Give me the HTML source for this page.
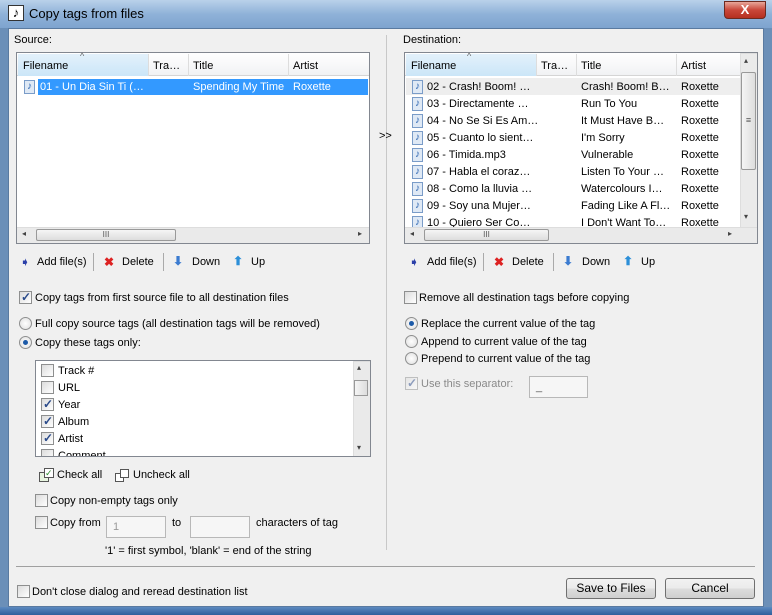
<!DOCTYPE html><html><head><style>
*{box-sizing:border-box;margin:0;padding:0}
body{width:772px;height:615px;overflow:hidden;background:#6b8fb8;font-family:"Liberation Sans",sans-serif;font-size:11px;color:#000;position:relative}
.a{position:absolute;white-space:nowrap}
.title{left:0;top:0;width:772px;height:28px;background:linear-gradient(180deg,#b9d1ea,#8fb2d8 50%,#7ea4cf);}
.client{left:8px;top:28px;width:756px;height:579px;background:#f0f0f0;border:1px solid #5a7aa0}
.lb{background:#fff;border:1px solid #828790}
.hdr{background:linear-gradient(#fff,#f1f2f4);border-bottom:1px solid #d5d5d5;height:23px}
.cb{width:13px;height:13px;border:1px solid #8e8f8f;background:linear-gradient(135deg,#dcdcdc,#fff)}
.rd{width:13px;height:13px;border:1px solid #8e8f8f;border-radius:50%;background:radial-gradient(#fff,#ddd)}
.rd.on::after{content:"";position:absolute;left:3px;top:3px;width:5px;height:5px;border-radius:50%;background:#1c5aa8}
.ck::after{content:"✓";position:absolute;left:1px;top:-2px;font-size:12px;color:#2a4a8a;font-weight:bold}
.inp{background:#f6f6f6;border:1px solid #b8b8b8}
.btn{border:1px solid #707070;border-radius:3px;background:linear-gradient(#f2f2f2,#ebebeb 50%,#dddddd 51%,#cfcfcf);text-align:center;line-height:19px;font-size:12px}
.mi{width:11px;height:14px;background:#dfe9f5;border:1px solid #7a9cc8;font-size:10px;color:#2b64b0;line-height:12px;text-align:center}
.sb{background:#eaeaea;border-top:1px solid #ddd}
</style></head><body>
<div class="a title"></div>
<div class="a" style="left:8px;top:5px;width:16px;height:16px;background:#fff;border:1px solid #333;font-size:13px;line-height:14px;text-align:center">♪</div>
<div class="a" style="left:29px;top:6px;font-size:13px">Copy tags from files</div>
<div class="a" style="left:724px;top:1px;width:42px;height:18px;border-radius:0 0 4px 4px;background:linear-gradient(#e8a79a,#c9473a 50%,#b52f20);border:1px solid #6d2a20;color:#fff;text-align:center;font-weight:bold;font-size:13px;line-height:16px">X</div>
<div class="a client"></div>

<div class="a" style="left:14px;top:34px">Source:</div>
<div class="a" style="left:403px;top:34px">Destination:</div>
<div class="a" style="left:386px;top:35px;width:1px;height:515px;background:#c8c8c8"></div>
<div class="a" style="left:379px;top:130px;font-size:11px">&gt;&gt;</div>

<!-- source list -->
<div class="a lb" style="left:16px;top:52px;width:354px;height:192px"></div>
<div class="a hdr" style="left:17px;top:53px;width:352px"></div>
<div class="a" style="left:18px;top:54px;width:130px;height:22px;background:linear-gradient(#e3f1fb,#cbe6f8)"></div>
<div class="a" style="left:80px;top:51px;font-size:9px;color:#666">^</div>
<div class="a" style="left:23px;top:60px">Filename</div>
<div class="a" style="left:148px;top:54px;width:1px;height:22px;background:#ddd"></div>
<div class="a" style="left:153px;top:60px">Tra…</div>
<div class="a" style="left:188px;top:54px;width:1px;height:22px;background:#ddd"></div>
<div class="a" style="left:193px;top:60px">Title</div>
<div class="a" style="left:288px;top:54px;width:1px;height:22px;background:#ddd"></div>
<div class="a" style="left:293px;top:60px">Artist</div>
<div class="a" style="left:38px;top:79px;width:330px;height:16px;background:#3399ff"></div>
<div class="a mi" style="left:24px;top:80px">♪</div>
<div class="a" style="left:40px;top:81px;color:#fff">01 - Un Dia Sin Ti (…</div>
<div class="a" style="left:193px;top:81px;color:#fff">Spending My Time</div>
<div class="a" style="left:293px;top:81px;color:#fff">Roxette</div>
<div class="a sb" style="left:17px;top:227px;width:352px;height:16px"></div>
<div class="a" style="left:36px;top:229px;width:140px;height:12px;border:1px solid #999;border-radius:2px;background:linear-gradient(#f5f5f5,#ddd);font-size:8px;text-align:center;line-height:10px;color:#555">III</div>
<div class="a" style="left:22px;top:229px;font-size:8px;color:#444">◂</div>
<div class="a" style="left:358px;top:229px;font-size:8px;color:#444">▸</div>

<!-- dest list -->
<div class="a lb" style="left:404px;top:52px;width:354px;height:192px"></div>
<div class="a hdr" style="left:405px;top:53px;width:335px"></div>
<div class="a" style="left:406px;top:54px;width:130px;height:22px;background:linear-gradient(#e3f1fb,#cbe6f8)"></div>
<div class="a" style="left:467px;top:51px;font-size:9px;color:#666">^</div>
<div class="a" style="left:411px;top:60px">Filename</div>
<div class="a" style="left:536px;top:54px;width:1px;height:22px;background:#ddd"></div>
<div class="a" style="left:541px;top:60px">Tra…</div>
<div class="a" style="left:576px;top:54px;width:1px;height:22px;background:#ddd"></div>
<div class="a" style="left:581px;top:60px">Title</div>
<div class="a" style="left:676px;top:54px;width:1px;height:22px;background:#ddd"></div>
<div class="a" style="left:681px;top:60px">Artist</div>
<div class="a" style="left:406px;top:78px;width:334px;height:17px;background:#eeeeee"></div>
<div class="a sb" style="left:740px;top:53px;width:17px;height:174px;border-left:1px solid #ddd"></div>
<div class="a" style="left:741px;top:72px;width:15px;height:98px;border:1px solid #999;border-radius:2px;background:linear-gradient(90deg,#f5f5f5,#ddd);font-size:9px;text-align:center;line-height:94px;color:#555">≡</div>
<div class="a" style="left:744px;top:56px;font-size:8px;color:#444">▴</div>
<div class="a" style="left:744px;top:212px;font-size:8px;color:#444">▾</div>
<div class="a sb" style="left:405px;top:227px;width:352px;height:16px"></div>
<div class="a" style="left:424px;top:229px;width:125px;height:12px;border:1px solid #999;border-radius:2px;background:linear-gradient(#f5f5f5,#ddd);font-size:8px;text-align:center;line-height:10px;color:#555">III</div>
<div class="a" style="left:410px;top:229px;font-size:8px;color:#444">◂</div>
<div class="a" style="left:728px;top:229px;font-size:8px;color:#444">▸</div>
<div class="a" style="left:405px;top:78px;width:335px;height:149px;overflow:hidden">
<div style="position:relative">
<div class="a mi" style="left:7px;top:2px">♪</div><div class="a" style="left:22px;top:3px">02 - Crash! Boom! …</div><div class="a" style="left:176px;top:3px">Crash! Boom! B…</div><div class="a" style="left:276px;top:3px">Roxette</div>
<div class="a mi" style="left:7px;top:19px">♪</div><div class="a" style="left:22px;top:20px">03 - Directamente …</div><div class="a" style="left:176px;top:20px">Run To You</div><div class="a" style="left:276px;top:20px">Roxette</div>
<div class="a mi" style="left:7px;top:36px">♪</div><div class="a" style="left:22px;top:37px">04 - No Se Si Es Am…</div><div class="a" style="left:176px;top:37px">It Must Have B…</div><div class="a" style="left:276px;top:37px">Roxette</div>
<div class="a mi" style="left:7px;top:53px">♪</div><div class="a" style="left:22px;top:54px">05 - Cuanto lo sient…</div><div class="a" style="left:176px;top:54px">I'm Sorry</div><div class="a" style="left:276px;top:54px">Roxette</div>
<div class="a mi" style="left:7px;top:70px">♪</div><div class="a" style="left:22px;top:71px">06 - Timida.mp3</div><div class="a" style="left:176px;top:71px">Vulnerable</div><div class="a" style="left:276px;top:71px">Roxette</div>
<div class="a mi" style="left:7px;top:87px">♪</div><div class="a" style="left:22px;top:88px">07 - Habla el coraz…</div><div class="a" style="left:176px;top:88px">Listen To Your …</div><div class="a" style="left:276px;top:88px">Roxette</div>
<div class="a mi" style="left:7px;top:104px">♪</div><div class="a" style="left:22px;top:105px">08 - Como la lluvia …</div><div class="a" style="left:176px;top:105px">Watercolours I…</div><div class="a" style="left:276px;top:105px">Roxette</div>
<div class="a mi" style="left:7px;top:121px">♪</div><div class="a" style="left:22px;top:122px">09 - Soy una Mujer…</div><div class="a" style="left:176px;top:122px">Fading Like A Fl…</div><div class="a" style="left:276px;top:122px">Roxette</div>
<div class="a mi" style="left:7px;top:138px">♪</div><div class="a" style="left:22px;top:139px">10 - Quiero Ser Co…</div><div class="a" style="left:176px;top:139px">I Don't Want To…</div><div class="a" style="left:276px;top:139px">Roxette</div>
</div></div>

<!-- toolbars -->
<div class="a" style="left:20px;top:255px;color:#2b3fa8;font-size:12px">➧</div><div class="a" style="left:37px;top:256px">Add file(s)</div>
<div class="a" style="left:93px;top:253px;width:1px;height:18px;background:#aaa"></div>
<div class="a" style="left:104px;top:255px;color:#d22;font-weight:bold;font-size:12px">✖</div><div class="a" style="left:122px;top:256px">Delete</div>
<div class="a" style="left:163px;top:253px;width:1px;height:18px;background:#aaa"></div>
<div class="a" style="left:173px;top:254px;color:#3b7bd0;font-weight:bold;font-size:12px">⬇</div><div class="a" style="left:192px;top:256px">Down</div>
<div class="a" style="left:233px;top:254px;color:#2c8fd8;font-weight:bold;font-size:12px">⬆</div><div class="a" style="left:251px;top:256px">Up</div>

<div class="a" style="left:409px;top:255px;color:#2b3fa8;font-size:12px">➧</div><div class="a" style="left:427px;top:256px">Add file(s)</div>
<div class="a" style="left:483px;top:253px;width:1px;height:18px;background:#aaa"></div>
<div class="a" style="left:494px;top:255px;color:#d22;font-weight:bold;font-size:12px">✖</div><div class="a" style="left:512px;top:256px">Delete</div>
<div class="a" style="left:553px;top:253px;width:1px;height:18px;background:#aaa"></div>
<div class="a" style="left:563px;top:254px;color:#3b7bd0;font-weight:bold;font-size:12px">⬇</div><div class="a" style="left:582px;top:256px">Down</div>
<div class="a" style="left:623px;top:254px;color:#2c8fd8;font-weight:bold;font-size:12px">⬆</div><div class="a" style="left:641px;top:256px">Up</div>

<!-- left options -->
<div class="a cb ck" style="left:19px;top:291px"></div><div class="a" style="left:35px;top:292px">Copy tags from first source file to all destination files</div>
<div class="a rd" style="left:19px;top:317px"></div><div class="a" style="left:35px;top:318px">Full copy source tags (all destination tags will be removed)</div>
<div class="a rd on" style="left:19px;top:336px"></div><div class="a" style="left:35px;top:337px">Copy these tags only:</div>

<div class="a lb" style="left:35px;top:360px;width:336px;height:97px"></div>
<div class="a sb" style="left:353px;top:361px;width:17px;height:95px;border-left:1px solid #ddd"></div>
<div class="a" style="left:354px;top:380px;width:14px;height:16px;border:1px solid #999;background:linear-gradient(90deg,#f5f5f5,#ddd)"></div>
<div class="a" style="left:357px;top:363px;font-size:8px;color:#444">▴</div>
<div class="a" style="left:357px;top:443px;font-size:8px;color:#444">▾</div>
<div class="a" style="left:36px;top:361px;width:316px;height:95px;overflow:hidden"><div style="position:relative">
<div class="a cb" style="left:5px;top:3px"></div><div class="a" style="left:22px;top:4px">Track #</div>
<div class="a cb" style="left:5px;top:20px"></div><div class="a" style="left:22px;top:21px">URL</div>
<div class="a cb ck" style="left:5px;top:37px"></div><div class="a" style="left:22px;top:38px">Year</div>
<div class="a cb ck" style="left:5px;top:54px"></div><div class="a" style="left:22px;top:55px">Album</div>
<div class="a cb ck" style="left:5px;top:71px"></div><div class="a" style="left:22px;top:72px">Artist</div>
<div class="a cb" style="left:5px;top:88px"></div><div class="a" style="left:22px;top:89px">Comment</div>
</div></div>

<div class="a" style="left:39px;top:472px;width:10px;height:10px;border:1px solid #555;background:#e8f5e0"></div><div class="a" style="left:44px;top:468px;width:10px;height:10px;border:1px solid #555;background:#fff;color:#2a8a2a;font-size:9px;line-height:9px">✓</div>
<div class="a" style="left:57px;top:469px">Check all</div>
<div class="a" style="left:115px;top:473px;width:9px;height:9px;border:1px solid #555;background:#fff"></div><div class="a" style="left:120px;top:469px;width:9px;height:9px;border:1px solid #555;background:#fff"></div>
<div class="a" style="left:133px;top:469px">Uncheck all</div>

<div class="a cb" style="left:35px;top:494px"></div><div class="a" style="left:50px;top:495px">Copy non-empty tags only</div>
<div class="a cb" style="left:35px;top:516px"></div><div class="a" style="left:50px;top:517px">Copy from</div>
<div class="a inp" style="left:106px;top:516px;width:60px;height:22px"></div><div class="a" style="left:113px;top:521px;color:#999">1</div>
<div class="a" style="left:172px;top:517px">to</div>
<div class="a inp" style="left:190px;top:516px;width:60px;height:22px"></div>
<div class="a" style="left:256px;top:517px">characters of tag</div>
<div class="a" style="left:105px;top:545px">'1' = first symbol, 'blank' = end of the string</div>
<div class="a" style="left:16px;top:566px;width:739px;height:1px;background:#a0a0a0"></div>

<div class="a cb" style="left:17px;top:585px"></div><div class="a" style="left:32px;top:586px">Don't close dialog and reread destination list</div>

<!-- right options -->
<div class="a cb" style="left:404px;top:291px"></div><div class="a" style="left:419px;top:292px">Remove all destination tags before copying</div>
<div class="a rd on" style="left:405px;top:317px"></div><div class="a" style="left:421px;top:318px">Replace the current value of the tag</div>
<div class="a rd" style="left:405px;top:335px"></div><div class="a" style="left:421px;top:336px">Append to current value of the tag</div>
<div class="a rd" style="left:405px;top:352px"></div><div class="a" style="left:421px;top:353px">Prepend to current value of the tag</div>
<div class="a cb ck" style="left:405px;top:377px;opacity:.5"></div><div class="a" style="left:421px;top:378px;color:#8a8a8a">Use this separator:</div>
<div class="a inp" style="left:529px;top:376px;width:59px;height:22px"></div><div class="a" style="left:536px;top:381px;color:#555">_</div>

<div class="a btn" style="left:566px;top:578px;width:90px;height:21px">Save to Files</div>
<div class="a btn" style="left:665px;top:578px;width:90px;height:21px">Cancel</div>
<div class="a" style="left:0;top:607px;width:772px;height:8px;background:linear-gradient(#5d8ac0,#2f5f9c)"></div>
</body></html>
